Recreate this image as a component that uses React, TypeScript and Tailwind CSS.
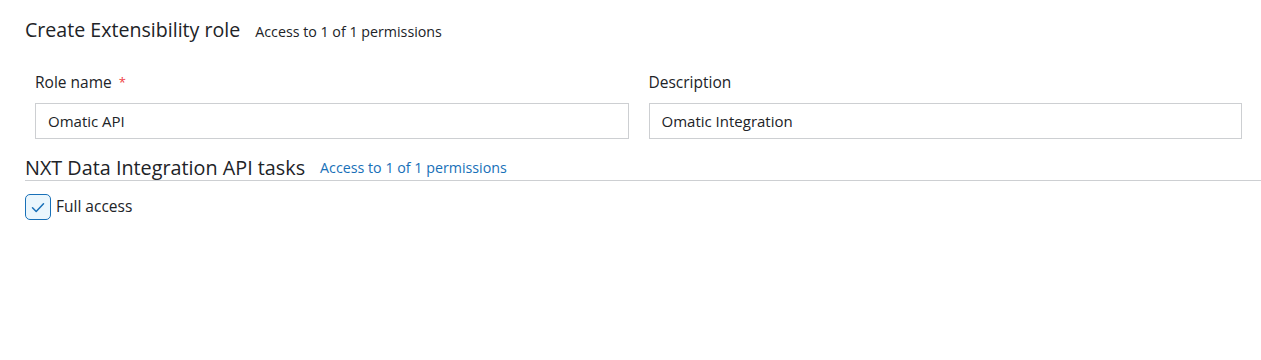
export default function App() {
  return (
    <div className="min-h-[360px] bg-white pt-[17px] font-['Open_Sans',sans-serif] text-[#212327]">
      {/* Page heading */}
      <div className="flex items-baseline gap-[15px] pl-[25px]">
        <h1 className="text-[19.6px] leading-[26px]">Create Extensibility role</h1>
        <span className="text-[14.25px]">Access to 1 of 1 permissions</span>
      </div>

      {/* Fields */}
      <div className="mt-[30px] grid grid-cols-2 gap-[20px] pl-[35px] pr-[19px]">
        <div>
          <label className="flex h-[20px] items-center text-[15.5px]">
            Role name
            <span className="ml-[7px] text-[13px] text-[#ef4044]">*</span>
          </label>
          <div className="mt-[10px] flex h-[36px] items-center border border-[#cdcfd2] px-[12px] text-[15px]">
            Omatic API
          </div>
        </div>
        <div>
          <label className="flex h-[20px] items-center text-[15.5px]">Description</label>
          <div className="mt-[10px] flex h-[36px] items-center border border-[#cdcfd2] px-[12px] text-[15px]">
            Omatic Integration
          </div>
        </div>
      </div>

      {/* Task section */}
      <div className="ml-[25px] mt-[17px] flex items-center gap-[15px] border-b border-[#cdcfd2]">
        <h2 className="text-[19.8px] leading-[24px]">NXT Data Integration API tasks</h2>
        <span className="text-[14.25px] leading-[20px] text-[#1870b8]">Access to 1 of 1 permissions</span>
      </div>

      <label className="ml-[25px] mt-[13px] flex items-center gap-[5px] text-[15.5px]">
        <span className="flex h-[26px] w-[26px] items-center justify-center rounded-[5px] border border-[#1870b8] bg-[#eaf6fd]">
          <svg width="14" height="11" viewBox="0 0 14 11" fill="none">
            <path d="M1.5 5.8l3.7 3.7L12.5 1.8" stroke="#1870b8" strokeWidth="1.5" strokeLinecap="round" strokeLinejoin="round" />
          </svg>
        </span>
        Full access
      </label>
    </div>
  );
}
